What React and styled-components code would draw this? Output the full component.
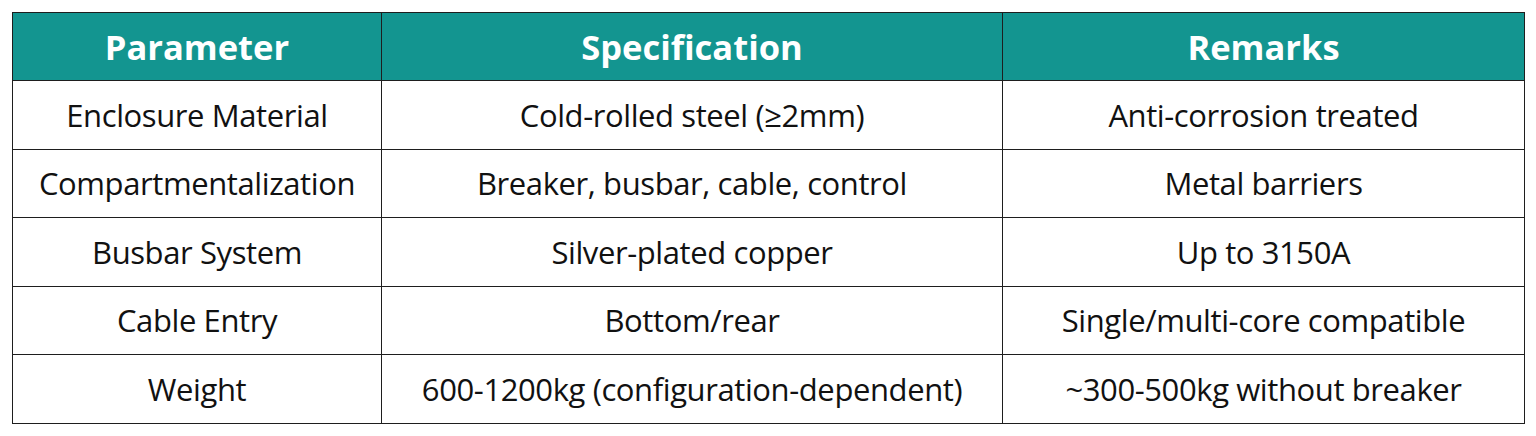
import React from "react";
import styled, { createGlobalStyle } from "styled-components";

const Global = createGlobalStyle`
  html, body { margin: 0; padding: 0; background: #ffffff; }
  body { font-family: "Open Sans", "Noto Sans", sans-serif; }
`;

const Page = styled.div`
  padding: 12px;
  width: 1536px;
  box-sizing: border-box;
`;

const Table = styled.table`
  width: 1512px;
  border-collapse: collapse;
  table-layout: fixed;
  border: 1.5px solid #1e1e1e;
`;

const Col = styled.col`
  width: ${(p) => p.$w}px;
`;

const HeadCell = styled.th`
  background: #139590;
  color: #ffffff;
  font-weight: 700;
  font-size: 34.5px;
  height: 67px;
  padding: 0;
  text-align: center;
  border: 1.5px solid #1e1e1e;
  letter-spacing: 0;
`;

const Cell = styled.td`
  color: #111111;
  font-size: 31px;
  height: 67.5px;
  padding: 0;
  text-align: center;
  border: 1.5px solid #1e1e1e;
  letter-spacing: -0.4px;
`;

const rows = [
  ["Enclosure Material", "Cold-rolled steel (≥2mm)", "Anti-corrosion treated"],
  ["Compartmentalization", "Breaker, busbar, cable, control", "Metal barriers"],
  ["Busbar System", "Silver-plated copper", "Up to 3150A"],
  ["Cable Entry", "Bottom/rear", "Single/multi-core compatible"],
  ["Weight", "600-1200kg (configuration-dependent)", "~300-500kg without breaker"],
];

export default function App() {
  return (
    <>
      <Global />
      <Page>
        <Table>
          <colgroup>
            <Col $w={369} />
            <Col $w={621} />
            <Col $w={522} />
          </colgroup>
          <thead>
            <tr>
              <HeadCell>Parameter</HeadCell>
              <HeadCell>Specification</HeadCell>
              <HeadCell>Remarks</HeadCell>
            </tr>
          </thead>
          <tbody>
            {rows.map((r) => (
              <tr key={r[0]}>
                {r.map((c, i) => (
                  <Cell key={i}>{c}</Cell>
                ))}
              </tr>
            ))}
          </tbody>
        </Table>
      </Page>
    </>
  );
}
